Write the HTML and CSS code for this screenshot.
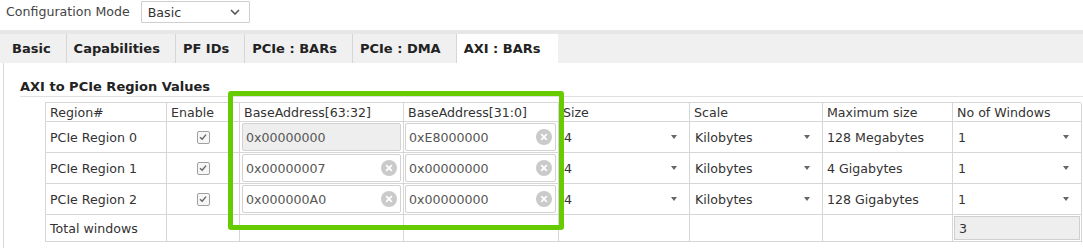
FILE: index.html
```html
<!DOCTYPE html>
<html>
<head>
<meta charset="utf-8">
<link rel="stylesheet" href="styles.css">
</head>
<body>
<div class="config-row">
  <span class="config-label">Configuration Mode</span>
  <div class="select">
    <span>Basic</span>
    <svg class="chev" width="10" height="6" viewBox="0 0 10 6"><path d="M1 1 L5 5 L9 1" fill="none" stroke="#555" stroke-width="1.6"/></svg>
  </div>
</div>
<div class="tabbar">
  <div class="tab">Basic</div>
  <div class="tab">Capabilities</div>
  <div class="tab">PF IDs</div>
  <div class="tab">PCIe : BARs</div>
  <div class="tab">PCIe : DMA</div>
  <div class="tab active">AXI : BARs</div>
</div>
<div class="panel">
  <div class="section-title">AXI to PCIe Region Values</div>
  <div class="table-wrap">
    <div class="grid">
      <div class="cell head">Region#</div>
      <div class="cell head">Enable</div>
      <div class="cell head">BaseAddress[63:32]</div>
      <div class="cell head">BaseAddress[31:0]</div>
      <div class="cell head">Size</div>
      <div class="cell head">Scale</div>
      <div class="cell head">Maximum size</div>
      <div class="cell head">No of Windows</div>

      <div class="cell">PCIe Region 0</div>
      <div class="cell center"><span class="check"><svg width="10" height="10" viewBox="0 0 10 10"><path d="M2 5.2 L4.2 7.3 L8 2.6" fill="none" stroke="#666" stroke-width="1.4"/></svg></span></div>
      <div class="cell inp"><div class="input disabled">0x00000000</div></div>
      <div class="cell inp"><div class="input">0xE8000000<span class="clear"><svg width="16" height="16" viewBox="0 0 16 16"><circle cx="8" cy="8" r="8" fill="#cacaca"/><path d="M5.2 5.2 L10.8 10.8 M10.8 5.2 L5.2 10.8" stroke="#fff" stroke-width="1.8"/></svg></span></div></div>
      <div class="cell drop">4<span class="arrow"></span></div>
      <div class="cell drop">Kilobytes<span class="arrow"></span></div>
      <div class="cell">128 Megabytes</div>
      <div class="cell drop">1<span class="arrow"></span></div>

      <div class="cell">PCIe Region 1</div>
      <div class="cell center"><span class="check"><svg width="10" height="10" viewBox="0 0 10 10"><path d="M2 5.2 L4.2 7.3 L8 2.6" fill="none" stroke="#666" stroke-width="1.4"/></svg></span></div>
      <div class="cell inp"><div class="input">0x00000007<span class="clear"><svg width="16" height="16" viewBox="0 0 16 16"><circle cx="8" cy="8" r="8" fill="#cacaca"/><path d="M5.2 5.2 L10.8 10.8 M10.8 5.2 L5.2 10.8" stroke="#fff" stroke-width="1.8"/></svg></span></div></div>
      <div class="cell inp"><div class="input">0x00000000<span class="clear"><svg width="16" height="16" viewBox="0 0 16 16"><circle cx="8" cy="8" r="8" fill="#cacaca"/><path d="M5.2 5.2 L10.8 10.8 M10.8 5.2 L5.2 10.8" stroke="#fff" stroke-width="1.8"/></svg></span></div></div>
      <div class="cell drop">4<span class="arrow"></span></div>
      <div class="cell drop">Kilobytes<span class="arrow"></span></div>
      <div class="cell">4 Gigabytes</div>
      <div class="cell drop">1<span class="arrow"></span></div>

      <div class="cell">PCIe Region 2</div>
      <div class="cell center"><span class="check"><svg width="10" height="10" viewBox="0 0 10 10"><path d="M2 5.2 L4.2 7.3 L8 2.6" fill="none" stroke="#666" stroke-width="1.4"/></svg></span></div>
      <div class="cell inp"><div class="input">0x000000A0<span class="clear"><svg width="16" height="16" viewBox="0 0 16 16"><circle cx="8" cy="8" r="8" fill="#cacaca"/><path d="M5.2 5.2 L10.8 10.8 M10.8 5.2 L5.2 10.8" stroke="#fff" stroke-width="1.8"/></svg></span></div></div>
      <div class="cell inp"><div class="input">0x00000000<span class="clear"><svg width="16" height="16" viewBox="0 0 16 16"><circle cx="8" cy="8" r="8" fill="#cacaca"/><path d="M5.2 5.2 L10.8 10.8 M10.8 5.2 L5.2 10.8" stroke="#fff" stroke-width="1.8"/></svg></span></div></div>
      <div class="cell drop">4<span class="arrow"></span></div>
      <div class="cell drop">Kilobytes<span class="arrow"></span></div>
      <div class="cell">128 Gigabytes</div>
      <div class="cell drop">1<span class="arrow"></span></div>

      <div class="cell">Total windows</div>
      <div class="cell"></div>
      <div class="cell"></div>
      <div class="cell"></div>
      <div class="cell"></div>
      <div class="cell"></div>
      <div class="cell"></div>
      <div class="cell total"><div class="total-box">3</div></div>
    </div>
    <div class="highlight"></div>
  </div>
</div>
</body>
</html>
```
FILE: styles.css
```css
* { box-sizing: border-box; }
html, body {
  margin: 0;
  padding: 0;
  background: #ffffff;
  font-family: "DejaVu Sans", "Liberation Sans", sans-serif;
  font-size: 12.6px;
  color: #333;
}
body {
  width: 1083px;
  height: 248px;
  overflow: hidden;
}
.config-row {
  height: 30px;
  padding-top: 1px;
  padding-left: 6px;
  display: flex;
  align-items: flex-start;
}
.config-label {
  line-height: 22px;
  color: #444;
  margin-right: 11px;
}
.select {
  width: 109px;
  height: 22px;
  border: 1px solid #cfcfcf;
  border-radius: 1px;
  display: flex;
  align-items: center;
  justify-content: space-between;
  padding: 0 9px 0 6px;
  color: #333;
}
.chev { display: block; }
.tabbar {
  height: 33px;
  background: #f0f0f0;
  border-top: 4px solid #e7e7e7;
  display: flex;
  padding-left: 5px;
}
.tab {
  height: 29px;
  line-height: 29px;
  font-size: 13px;
  font-weight: bold;
  color: #222;
  padding: 0 15px 0 7px;
  border-right: 1px solid #d6d6d6;
}
.tab.active {
  background: #ffffff;
  border-right: none;
  padding-right: 17px;
}
.panel {
  margin-left: 3px;
  border-left: 1px solid #d8d8d8;
  padding-left: 16px;
  padding-top: 16px;
  height: 185px;
}
.section-title {
  height: 18px;
  line-height: 16px;
  padding-bottom: 2px;
  font-size: 13px;
  font-weight: bold;
  color: #222;
  border-bottom: 1px solid #e0e0e0;
}
.table-wrap {
  position: relative;
  margin-top: 5px;
  margin-left: 25px;
  width: 1036px;
}
.grid {
  display: grid;
  grid-template-columns: 121px 73px 164px 155px 131px 133px 130px 129px;
  grid-template-rows: 19px 31px 31px 31px 27px;
  border-left: 1px solid #d6d6d6;
  border-top: 1px solid #d6d6d6;
}
.cell {
  border-right: 1px solid #d6d6d6;
  border-bottom: 1px solid #d6d6d6;
  display: flex;
  align-items: center;
  padding: 0 4px;
  white-space: nowrap;
  color: #333;
}
.cell.head { line-height: 17px; }
.cell.center { justify-content: center; }
.check {
  width: 13px;
  height: 13px;
  border: 1px solid #a0a0a0;
  border-radius: 2px;
  background: #f6f6f6;
  display: flex;
  align-items: center;
  justify-content: center;
}
.check svg { display: block; }
.cell.inp { padding: 1px 2px 1px 2px; }
.cell.inp:nth-child(8n+4) { padding-left: 1px; }
.input {
  width: 100%;
  height: 28px;
  border: 1px solid #d2d2d2;
  border-radius: 2px;
  background: #ffffff;
  color: #555;
  padding-left: 3px;
  display: flex;
  align-items: center;
  justify-content: space-between;
  padding-right: 3px;
}
.input.disabled { background: #eeeeee; }
.clear { display: flex; }
.clear svg { display: block; }
.cell.drop {
  justify-content: space-between;
  padding-left: 5px;
  padding-right: 12px;
}
.arrow {
  width: 0;
  height: 0;
  border-left: 3.5px solid transparent;
  border-right: 3.5px solid transparent;
  border-top: 4px solid #666;
}
.cell.total { padding: 1px; }
.total-box {
  width: 100%;
  height: 100%;
  background: #eeeeee;
  border: 1px solid #cfcfcf;
  padding-left: 4px;
  display: flex;
  align-items: center;
  color: #333;
}
.highlight {
  position: absolute;
  left: 183px;
  top: -11px;
  width: 336px;
  height: 139px;
  border: 5px solid #66cc00;
  border-radius: 3px;
  pointer-events: none;
}
```
